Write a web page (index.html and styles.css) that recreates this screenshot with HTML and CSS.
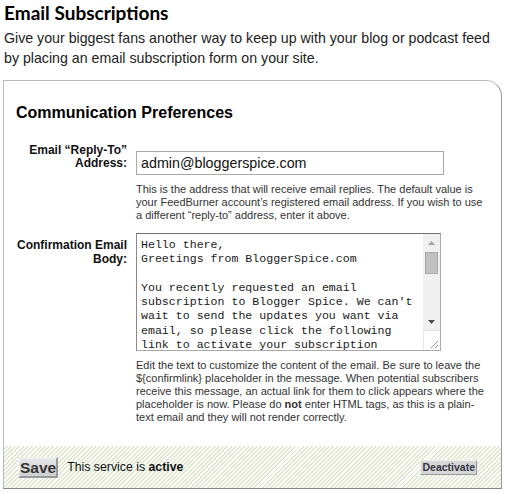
FILE: index.html
```html
<!DOCTYPE html>
<html>
<head>
<meta charset="utf-8">
<link rel="stylesheet" href="styles.css">
</head>
<body>
<div class="page">
  <h1 class="title">Email Subscriptions</h1>
  <p class="intro">Give your biggest fans another way to keep up with your blog or podcast feed by placing an email subscription form on your site.</p>
  <div class="panel">
    <h2 class="panel-title">Communication Preferences</h2>
    <div class="row row-email">
      <label class="label">Email “Reply-To” Address:</label>
      <div class="field">
        <input class="text-input" type="text" value="admin@bloggerspice.com">
        <p class="help">This is the address that will receive email replies. The default value is your FeedBurner account’s registered email address. If you wish to use a different “reply-to” address, enter it above.</p>
      </div>
    </div>
    <div class="row row-body">
      <label class="label">Confirmation Email Body:</label>
      <div class="field">
        <div class="textbox">
          <textarea class="body-input">Hello there,
Greetings from BloggerSpice.com

You recently requested an email subscription to Blogger Spice. We can't wait to send the updates you want via email, so please click the following link to activate your subscription immediately:

${confirmlink}

(If the link above does not appear clickable or does not open a browser window when you click it, copy it and paste it into your web browser's Location bar.)</textarea>
          <div class="scrollbar">
            <div class="sb-arrow">
              <svg width="7" height="4" viewBox="0 0 7 4"><polygon points="0,4 7,4 3.5,0" fill="#a3a3a3"/></svg>
            </div>
            <div class="sb-track"><div class="sb-thumb"></div></div>
            <div class="sb-arrow">
              <svg width="7" height="4" viewBox="0 0 7 4"><polygon points="0,0 7,0 3.5,4" fill="#505050"/></svg>
            </div>
            <div class="sb-corner">
              <svg width="8" height="8" viewBox="0 0 8 8"><path d="M8 1 L1 8 M8 5 L5 8" stroke="#9a9a9a" stroke-width="1"/></svg>
            </div>
          </div>
        </div>
        <p class="help help-body">Edit the text to customize the content of the email. Be sure to leave the ${confirmlink} placeholder in the message. When potential subscribers receive this message, an actual link for them to click appears where the placeholder is now. Please do <b>not</b> enter HTML tags, as this is a plain-text email and they will not render correctly.</p>
      </div>
    </div>
    <div class="footer">
      <button class="btn-save" type="button">Save</button>
      <span class="status">This service is <b>active</b></span>
      <button class="btn-deactivate" type="button">Deactivate</button>
    </div>
  </div>
</div>
</body>
</html>
```

FILE: styles.css
```css
html, body {
  margin: 0;
  padding: 0;
  background: #fff;
}
.page {
  width: 508px;
  font-family: "Liberation Sans", Arial, sans-serif;
  color: #111;
}
.title {
  margin: 0;
  padding: 2px 0 0 4px;
  font-family: Lato, "Liberation Sans", sans-serif;
  font-weight: 700;
  font-size: 19px;
  line-height: 22px;
  color: #000;
}
.intro {
  margin: 4px 0 0 0;
  padding-left: 4px;
  font-size: 14.2px;
  line-height: 20px;
  color: #222;
}
.panel {
  margin: 12px 0 0 3px;
  width: 497px;
  border: 1px solid #bbb;
  border-right-color: #999;
  border-bottom-color: #888;
  border-top-right-radius: 16px;
  display: flex;
  flex-direction: column;
}
.panel-title {
  margin: 22px 0 0 12px;
  font-size: 16px;
  line-height: 20px;
  font-weight: 700;
  color: #000;
}
.row {
  display: grid;
  grid-template-columns: 123px 352px;
  column-gap: 9px;
}
.row-email {
  margin-top: 28px;
}
.row-body {
  margin-top: 11px;
}
.label {
  font-size: 12px;
  font-weight: 700;
  line-height: 13.3px;
  text-align: right;
  color: #111;
}
.row-email .label {
  margin-top: -7.5px;
}
.row-body .label {
  margin-top: 5px;
  line-height: 14.3px;
}
.field {
  display: flex;
  flex-direction: column;
}
.text-input {
  box-sizing: border-box;
  width: 308px;
  height: 24px;
  margin: 0;
  padding: 0 4px;
  border: 1px solid #aaa;
  font-family: "Liberation Sans", Arial, sans-serif;
  font-size: 14.3px;
  color: #111;
  outline: none;
}
.help {
  margin: 8px 0 0 0;
  font-size: 11px;
  line-height: 13px;
  color: #333;
}
.textbox {
  box-sizing: border-box;
  width: 305px;
  height: 118px;
  display: flex;
  border: 1px solid #aaa;
  border-top-color: #6e6e6e;
  border-left-color: #8a8a8a;
}
.body-input {
  flex: 1;
  min-width: 0;
  box-sizing: border-box;
  margin: 0;
  padding: 4px 2px 0 4px;
  border: 0;
  font-family: "Liberation Mono", "Courier New", monospace;
  font-size: 11.6px;
  line-height: 14.3px;
  color: #1a1a1a;
  resize: none;
  overflow: hidden;
  outline: none;
  background: #fff;
}
.scrollbar {
  width: 17px;
  display: flex;
  flex-direction: column;
  background: #f0f0f0;
}
.sb-arrow {
  height: 17px;
  display: flex;
  align-items: center;
  justify-content: center;
}
.sb-track {
  flex: 1;
  padding-top: 1px;
}
.sb-thumb {
  margin: 0 2px;
  height: 22px;
  box-sizing: border-box;
  background: #c1c1c1;
  border: 1px solid #a8a8a8;
}
.sb-corner {
  height: 17px;
  background: #fff;
  border-top: 1px solid #e6e6e6;
  border-left: 1px solid #e6e6e6;
  display: flex;
  align-items: flex-end;
  justify-content: flex-end;
  padding: 0 2px 2px 0;
}
.help-body {
  margin-top: 8px;
  line-height: 13px;
}
.footer {
  margin-top: 22px;
  height: 42px;
  display: flex;
  align-items: center;
  padding: 0 24px 0 14px;
  background: repeating-linear-gradient(135deg, #fff 0, #fff 1.6px, #dce7cd 1.6px, #dce7cd 3px);
}
.btn-save {
  height: 21px;
  padding: 0;
  margin: 0;
  font-family: "Liberation Sans", Arial, sans-serif;
  font-size: 15.5px;
  font-weight: 700;
  line-height: 17px;
  color: #333;
  background: linear-gradient(#e4e4e4, #cfcfcf);
  border: 2px solid;
  border-color: #eee #999 #999 #eee;
}
.status {
  margin-left: 9px;
  font-size: 12.3px;
  color: #111;
  flex: 1;
}
.btn-deactivate {
  height: 15px;
  margin: 1px 0 0 0;
  padding: 0 1px;
  font-family: "Liberation Sans", Arial, sans-serif;
  font-size: 10.5px;
  font-weight: 700;
  line-height: 11px;
  color: #334;
  background: #d6d6d6;
  border: 1px solid;
  border-color: #eee #999 #999 #eee;
}
```
